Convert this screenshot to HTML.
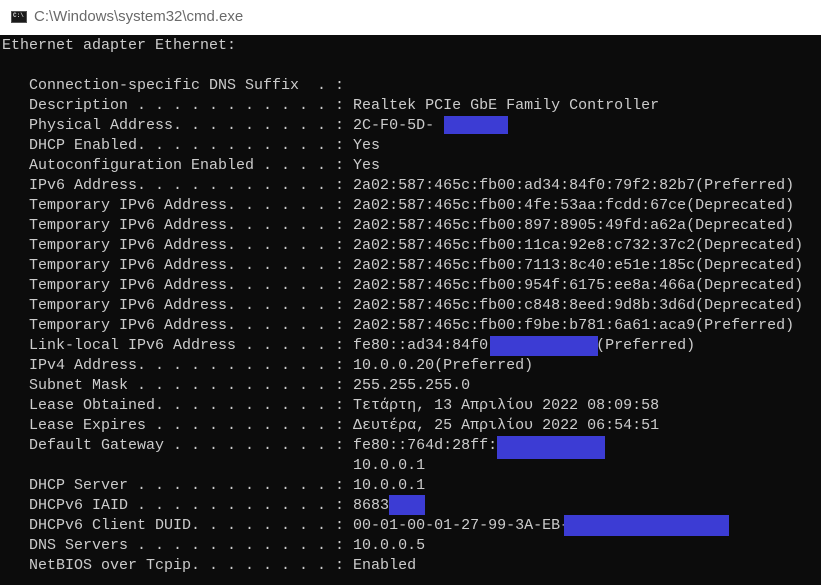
<!DOCTYPE html>
<html><head><meta charset="utf-8"><style>
html,body{margin:0;padding:0;width:821px;height:585px;overflow:hidden;background:#0c0c0c}
.title{position:absolute;left:0;top:0;width:821px;height:35px;background:#fff;}
.title span{position:absolute;left:34px;top:8px;font:15px "Liberation Sans",sans-serif;color:#6a6a6a}
.icon{position:absolute;left:11px;top:11px;width:16px;height:12px;background:#1a1a1a;border:1px solid #555;box-sizing:border-box}
.icon i{position:absolute;left:1px;top:1px;font:bold 6px "Liberation Mono",monospace;color:#ddd;font-style:normal;line-height:6px}
pre{position:absolute;left:2px;top:36px;margin:0;font:15px/20px "Liberation Mono","DejaVu Sans Mono",monospace;color:#cccccc;letter-spacing:0}
.b{position:absolute;background:#3c3cd4}
</style></head><body>
<div class="title"><div class="icon"><i>C:\</i></div><span>C:\Windows\system32\cmd.exe</span></div>
<pre>Ethernet adapter Ethernet:

   Connection-specific DNS Suffix  . :
   Description . . . . . . . . . . . : Realtek PCIe GbE Family Controller
   Physical Address. . . . . . . . . : 2C-F0-5D-
   DHCP Enabled. . . . . . . . . . . : Yes
   Autoconfiguration Enabled . . . . : Yes
   IPv6 Address. . . . . . . . . . . : 2a02:587:465c:fb00:ad34:84f0:79f2:82b7(Preferred)
   Temporary IPv6 Address. . . . . . : 2a02:587:465c:fb00:4fe:53aa:fcdd:67ce(Deprecated)
   Temporary IPv6 Address. . . . . . : 2a02:587:465c:fb00:897:8905:49fd:a62a(Deprecated)
   Temporary IPv6 Address. . . . . . : 2a02:587:465c:fb00:11ca:92e8:c732:37c2(Deprecated)
   Temporary IPv6 Address. . . . . . : 2a02:587:465c:fb00:7113:8c40:e51e:185c(Deprecated)
   Temporary IPv6 Address. . . . . . : 2a02:587:465c:fb00:954f:6175:ee8a:466a(Deprecated)
   Temporary IPv6 Address. . . . . . : 2a02:587:465c:fb00:c848:8eed:9d8b:3d6d(Deprecated)
   Temporary IPv6 Address. . . . . . : 2a02:587:465c:fb00:f9be:b781:6a61:aca9(Preferred)
   Link-local IPv6 Address . . . . . : fe80::ad34:84f0            (Preferred)
   IPv4 Address. . . . . . . . . . . : 10.0.0.20(Preferred)
   Subnet Mask . . . . . . . . . . . : 255.255.255.0
   Lease Obtained. . . . . . . . . . : Τετάρτη, 13 Απριλίου 2022 08:09:58
   Lease Expires . . . . . . . . . . : Δευτέρα, 25 Απριλίου 2022 06:54:51
   Default Gateway . . . . . . . . . : fe80::764d:28ff:
                                       10.0.0.1
   DHCP Server . . . . . . . . . . . : 10.0.0.1
   DHCPv6 IAID . . . . . . . . . . . : 8683
   DHCPv6 Client DUID. . . . . . . . : 00-01-00-01-27-99-3A-EB-
   DNS Servers . . . . . . . . . . . : 10.0.0.5
   NetBIOS over Tcpip. . . . . . . . : Enabled</pre>
<div class="b" style="left:444px;top:116px;width:64px;height:18px"></div>
<div class="b" style="left:490px;top:336px;width:108px;height:20px"></div>
<div class="b" style="left:497px;top:436px;width:108px;height:23px"></div>
<div class="b" style="left:389px;top:495px;width:36px;height:20px"></div>
<div class="b" style="left:564px;top:515px;width:165px;height:21px"></div>
</body></html>
